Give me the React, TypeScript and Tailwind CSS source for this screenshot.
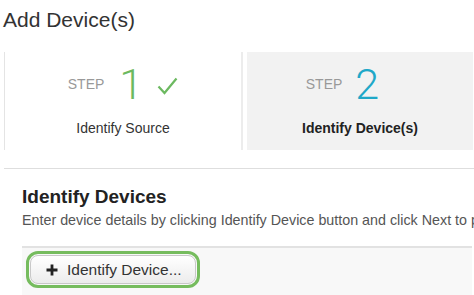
export default function App() {
  return (
    <div className="w-[474px] h-[295px] overflow-hidden bg-white text-[#333] font-['Liberation_Sans',Arial,sans-serif]">
      <h1 className="pl-[3px] pt-[8px] text-[21px] leading-[24px] text-[#333]">Add Device(s)</h1>

      {/* stepper */}
      <div className="mt-[20px] ml-[4px] flex h-[98px] border-l border-[#e4e4e4]">
        <div className="w-[236px] flex flex-col items-center">
          <div className="mt-[14px] flex items-center h-[36px]">
            <span className="text-[14px] text-[#999]">STEP</span>
            <span className="ml-[15px] text-[43px] leading-[36px] font-['Roboto',sans-serif] font-light text-[#6cb960]">1</span>
            <svg className="ml-[14px] mt-[3px]" width="21" height="18" viewBox="0 0 21 18">
              <path d="M1.5 9.5 L7.5 16 L19.5 1.5" fill="none" stroke="#6cb960" strokeWidth="2.2" />
            </svg>
          </div>
          <div className="mt-[16px] text-[14px] text-[#333]">Identify Source</div>
        </div>
        <div className="w-[2px] bg-[#ececec]" />
        <div className="ml-[4px] w-[226px] bg-[#f2f2f2] flex flex-col items-center">
          <div className="mt-[14px] flex items-center h-[36px]">
            <span className="text-[14px] text-[#999]">STEP</span>
            <span className="ml-[13px] text-[43px] leading-[36px] font-['Roboto',sans-serif] font-light text-[#1fa8c8]">2</span>
            <span className="ml-[14px] w-[21px]" />
          </div>
          <div className="mt-[16px] text-[14px] font-bold text-[#222]">Identify Device(s)</div>
        </div>
      </div>

      <div className="mt-[18px] ml-[4px] border-t border-[#dedede]" />

      <div className="pl-[22px]">
        <h2 className="mt-[18px] text-[19px] leading-[20px] font-bold text-[#222]">Identify Devices</h2>
        <p className="mt-[5px] text-[14.3px] leading-[16px] text-[#555] whitespace-nowrap">
          Enter device details by clicking Identify Device button and click Next to proceed.
        </p>
        <div className="mt-[18px] border-t-2 border-[#e2e2e2] bg-[#f8f8f8] h-[60px] mr-[2px] pt-[3px] pl-[4px]">
          <div className="inline-flex rounded-[12px] border-[3px] border-[#76bc5e] p-[1px]">
            <button className="flex items-center h-[29px] w-[166px] rounded-[8px] border border-[#c8c8c8] bg-gradient-to-b from-white to-[#ececec] pl-[15px] text-[15.5px] text-[#333]">
              <svg width="12" height="12" viewBox="0 0 12 12" className="mr-[9px]">
                <path d="M6 0.5 V11.5 M0.5 6 H11.5" stroke="#222" strokeWidth="2.8" />
              </svg>
              Identify Device...
            </button>
          </div>
        </div>
      </div>
    </div>
  )
}
